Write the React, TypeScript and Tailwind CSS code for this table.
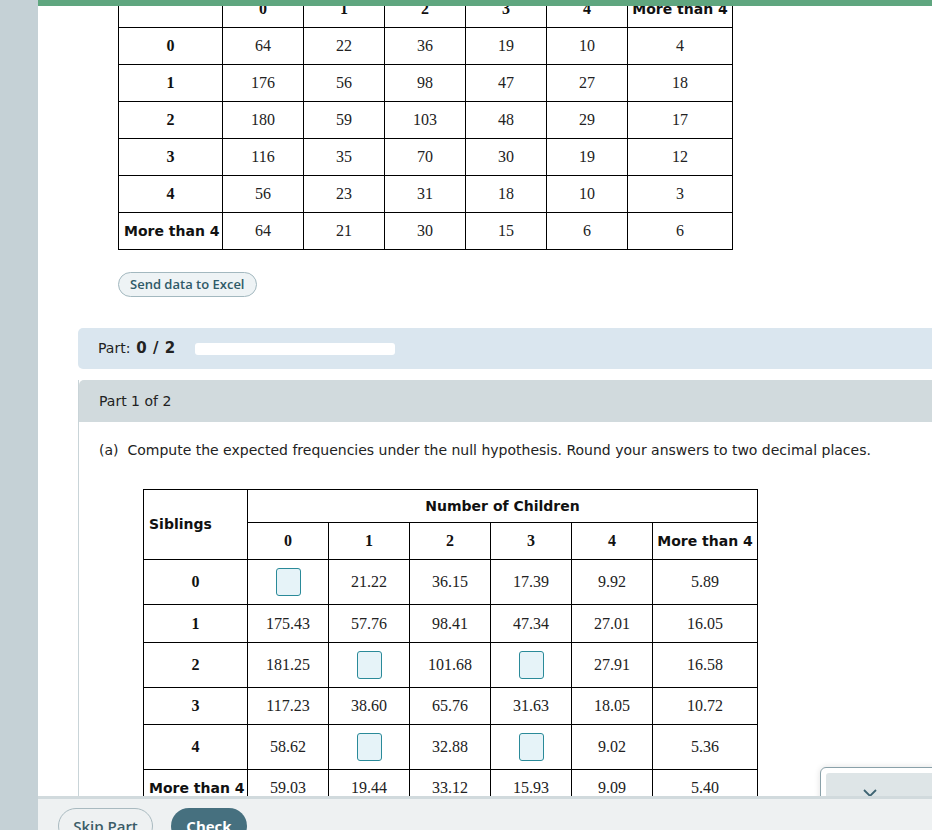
import React from "react";

const serif = "font-['Liberation_Serif',serif]";
const sans = "font-['DejaVu_Sans',Verdana,sans-serif]";

const t1Rows: [string, string[]][] = [
  ["0", ["64", "22", "36", "19", "10", "4"]],
  ["1", ["176", "56", "98", "47", "27", "18"]],
  ["2", ["180", "59", "103", "48", "29", "17"]],
  ["3", ["116", "35", "70", "30", "19", "12"]],
  ["4", ["56", "23", "31", "18", "10", "3"]],
  ["More than 4", ["64", "21", "30", "15", "6", "6"]],
];

const t2Rows: [string, string[], string][] = [
  ["0", ["", "21.22", "36.15", "17.39", "9.92", "5.89"], "h-[45px]"],
  ["1", ["175.43", "57.76", "98.41", "47.34", "27.01", "16.05"], "h-[38px]"],
  ["2", ["181.25", "", "101.68", "", "27.91", "16.58"], "h-[45px]"],
  ["3", ["117.23", "38.60", "65.76", "31.63", "18.05", "10.72"], "h-[37px]"],
  ["4", ["58.62", "", "32.88", "", "9.02", "5.36"], "h-[45px]"],
  ["More than 4", ["59.03", "19.44", "33.12", "15.93", "9.09", "5.40"], "h-[37px]"],
];

function Cols() {
  return (
    <colgroup>
      <col className="w-[104px]" />
      <col className="w-[81px]" />
      <col className="w-[81px]" />
      <col className="w-[81px]" />
      <col className="w-[81px]" />
      <col className="w-[81px]" />
      <col className="w-[105px]" />
    </colgroup>
  );
}

function RowLabel({ label }: { label: string }) {
  if (label.startsWith("More")) {
    return (
      <td className={`border border-black p-0 pl-[5px] text-left text-[14px] font-bold text-[#111] ${sans}`}>
        {label}
      </td>
    );
  }
  return (
    <td className={`border border-black p-0 text-center text-[16px] font-bold text-[#111] ${serif}`}>{label}</td>
  );
}

function InputBox() {
  return (
    <div className="mx-auto h-[28px] w-[25px] rounded-[3px] border border-[#2a8a99] bg-[#e6f3f8]" />
  );
}

export default function App() {
  return (
    <div className="relative flex h-[830px] w-[932px] overflow-hidden bg-white">
      <div className="w-[38px] shrink-0 bg-[#c5d1d6]" />
      <div className="relative flex-1">
        <div className="absolute left-0 right-0 top-0 z-10 h-[6px] bg-[#5fa67f]" />
        <div className="mt-[-10px]">
          {/* Table 1 */}
          <table className={`ml-[80px] w-[614px] table-fixed border-collapse ${serif} text-[16px] text-[#222]`}>
            <Cols />
            <tbody>
              <tr className="h-[37px]">
                <td className="border border-black p-0" />
                {["0", "1", "2", "3", "4"].map((h) => (
                  <td key={h} className="border border-black p-0 text-center font-bold text-[#111]">
                    {h}
                  </td>
                ))}
                <td className={`border border-black p-0 text-center text-[14px] font-bold text-[#111] ${sans}`}>More than 4</td>
              </tr>
              {t1Rows.map(([label, vals]) => (
                <tr key={label} className="h-[37px]">
                  <RowLabel label={label} />
                  {vals.map((v, i) => (
                    <td key={i} className="border border-black p-0 text-center">
                      {v}
                    </td>
                  ))}
                </tr>
              ))}
            </tbody>
          </table>

          <button className="ml-[80px] mt-[22px] flex h-[25px] items-center rounded-full border border-[#a3b8bf] bg-[#eef3f5] px-[11px] font-['Open_Sans',sans-serif] text-[13px] font-semibold text-[#2f5a68]">
            Send data to Excel
          </button>

          {/* Part bar */}
          <div className={`ml-[40px] mt-[31px] flex h-[41px] items-center rounded-l-[5px] bg-[#dae6ef] pl-[20px] ${sans} text-[14px] text-[#222]`}>
            <span>Part:</span>
            <span className="ml-[6px] text-[15px] font-bold tracking-[0.5px]">0 / 2</span>
            <div className="ml-[19px] h-[12px] w-[200px] rounded-[3px] bg-white" />
          </div>

          {/* Part card */}
          <div className={`ml-[40px] mt-[11px] border-l border-[#c9d4d8] ${sans} text-[14px] text-[#222]`}>
            <div className="flex h-[42px] items-center rounded-tl-[5px] bg-[#d1dadd] pl-[20px]">Part 1 of 2</div>
            <div className="pl-[20px] pt-[19px] leading-[18px]">
              (a)&nbsp; Compute the expected frequencies under the null hypothesis. Round your answers to two decimal places.
            </div>
            <table className={`ml-[64px] mt-[30px] w-[614px] table-fixed border-collapse ${serif} text-[16px] text-[#222]`}>
              <Cols />
              <tbody>
                <tr className="h-[33px]">
                  <td rowSpan={2} className={`border border-black p-0 pl-[5px] text-left text-[14px] font-bold text-[#111] ${sans}`}>
                    Siblings
                  </td>
                  <td colSpan={6} className={`border border-black p-0 text-center text-[14px] font-bold text-[#111] ${sans}`}>
                    Number of Children
                  </td>
                </tr>
                <tr className="h-[37px]">
                  {["0", "1", "2", "3", "4"].map((h) => (
                    <td key={h} className="border border-black p-0 text-center font-bold text-[#111]">
                      {h}
                    </td>
                  ))}
                  <td className={`border border-black p-0 text-center text-[14px] font-bold text-[#111] ${sans}`}>More than 4</td>
                </tr>
                {t2Rows.map(([label, vals, h]) => (
                  <tr key={label} className={h}>
                    <RowLabel label={label} />
                    {vals.map((v, i) => (
                      <td key={i} className="border border-black p-0 text-center">
                        {v === "" ? <InputBox /> : v}
                      </td>
                    ))}
                  </tr>
                ))}
              </tbody>
            </table>
          </div>
        </div>

        {/* Floating right box */}
        <div className="absolute left-[782px] top-[767px] h-[60px] w-[140px] rounded-[6px] border border-[#8aa1a9] bg-white p-[5px] shadow-[0_0_6px_rgba(0,0,0,0.12)]">
          <div className="flex h-full justify-center rounded-[3px] bg-[#dee5e7] pt-[16px]">
            <svg width="14" height="8" viewBox="0 0 14 8" className="ml-[-40px]">
              <path d="M1 1 L7 7 L13 1" fill="none" stroke="#3e6473" strokeWidth="1.8" />
            </svg>
          </div>
        </div>

        {/* Bottom bar */}
        <div className="absolute bottom-0 left-0 right-0 z-20 h-[34px] border-t-[3px] border-[#d1dadd] bg-[#eef1f2]">
          <div className="flex gap-[18px] pl-[20px] pt-[9px]">
            <button className="flex h-[36px] w-[95px] shrink-0 items-center justify-center rounded-full border border-[#a9bac0] bg-[#eef1f2] font-['Open_Sans',sans-serif] text-[15px] font-semibold text-[#3b5c68]">
              Skip Part
            </button>
            <button className="flex h-[36px] w-[76px] shrink-0 items-center justify-center rounded-full bg-[#46707f] font-['Open_Sans',sans-serif] text-[15px] font-bold text-white">
              Check
            </button>
          </div>
        </div>
      </div>
    </div>
  );
}
